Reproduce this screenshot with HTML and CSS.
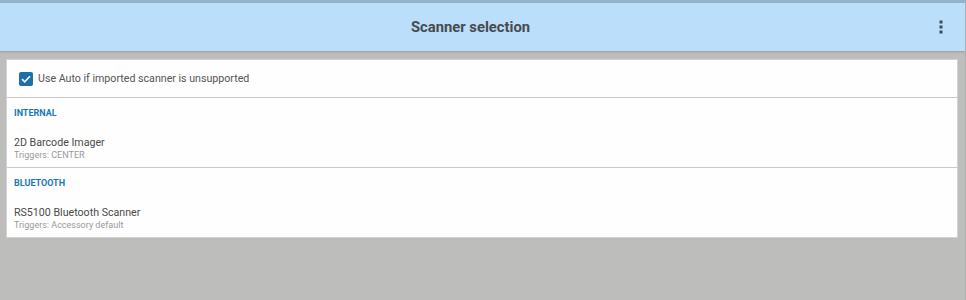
FILE: index.html
```html
<!DOCTYPE html>
<html lang="en">
<head>
    <meta charset="UTF-8">
    <meta name="viewport" content="width=device-width, initial-scale=1.0">
    <title>Scanner selection</title>
    <link rel="stylesheet" href="styles.css">
</head>
<body>
    <div class="status-strip"></div>
    <div class="app-bar">
        <h1 class="app-title">Scanner selection</h1>
        <button class="menu-button" aria-label="More options">
            <svg width="4" height="14" viewBox="0 0 4 14">
                <rect x="0.5" y="0.5" width="3" height="3" fill="#3f4a52"/>
                <rect x="0.5" y="5.5" width="3" height="3" fill="#3f4a52"/>
                <rect x="0.5" y="10.5" width="3" height="3" fill="#3f4a52"/>
            </svg>
        </button>
    </div>

    <div class="content">
        <div class="card">
            <label class="check-row">
                <span class="checkbox">
                    <svg width="10" height="8" viewBox="0 0 10 8">
                        <path d="M1 4.2 L3.7 6.8 L9 1.2" fill="none" stroke="#fff" stroke-width="1.6"/>
                    </svg>
                </span>
                <span class="check-label">Use Auto if imported scanner is unsupported</span>
            </label>

            <div class="group">
                <div class="group-title">INTERNAL</div>
                <div class="item">
                    <div class="item-name">2D Barcode Imager</div>
                    <div class="item-sub">Triggers: CENTER</div>
                </div>
            </div>

            <div class="group">
                <div class="group-title">BLUETOOTH</div>
                <div class="item">
                    <div class="item-name">RS5100 Bluetooth Scanner</div>
                    <div class="item-sub">Triggers: Accessory default</div>
                </div>
            </div>
        </div>
    </div>
</body>
</html>
```

FILE: styles.css
```css
html, body {
    height: 100%;
}
body {
    margin: 0;
    padding: 0;
    font-family: Roboto, "Liberation Sans", Arial, sans-serif;
    background: #bdbebb;
    border-right: 1px solid #aeb0ad;
    box-sizing: border-box;
    overflow: hidden;
}
.status-strip {
    height: 3px;
    background: #93b3cb;
}
.app-bar {
    height: 48px;
    background: #bbdefb;
    display: flex;
    align-items: center;
    justify-content: center;
    padding-right: 24px;
    position: relative;
    box-shadow: 0 1px 2px rgba(0, 0, 0, 0.18);
}
.app-title {
    margin: 0;
    font-size: 14.8px;
    font-weight: 700;
    color: #454b4f;
}
.menu-button {
    position: absolute;
    right: 22px;
    top: 17px;
    padding: 0;
    margin: 0;
    border: none;
    background: none;
    display: flex;
}
.content {
    padding: 8px 7px 0 6px;
}
.card {
    background: #fdfefd;
    border: 1px solid #d2d3d1;
}
.check-row {
    display: flex;
    align-items: center;
    height: 37px;
    padding-left: 12px;
    border-bottom: 1px solid #c9cac8;
}
.checkbox {
    width: 14px;
    height: 14px;
    border-radius: 2px;
    background: #1c6fa9;
    display: flex;
    align-items: center;
    justify-content: center;
    margin-right: 5px;
}
.check-label {
    font-size: 10.65px;
    color: #555;
}
.group {
    height: 69px;
    padding-left: 7px;
    border-bottom: 1px solid #c9cac8;
}
.group:last-child {
    border-bottom: none;
}
.group-title {
    padding-top: 9px;
    font-size: 9px;
    font-weight: 700;
    color: #1b78b6;
    line-height: 12px;
}
.item {
    padding-top: 17px;
}
.item-name {
    font-size: 10.65px;
    color: #4a4a4a;
    line-height: 13px;
}
.item-sub {
    font-size: 9px;
    color: #9a9a9a;
    line-height: 12px;
}
```
